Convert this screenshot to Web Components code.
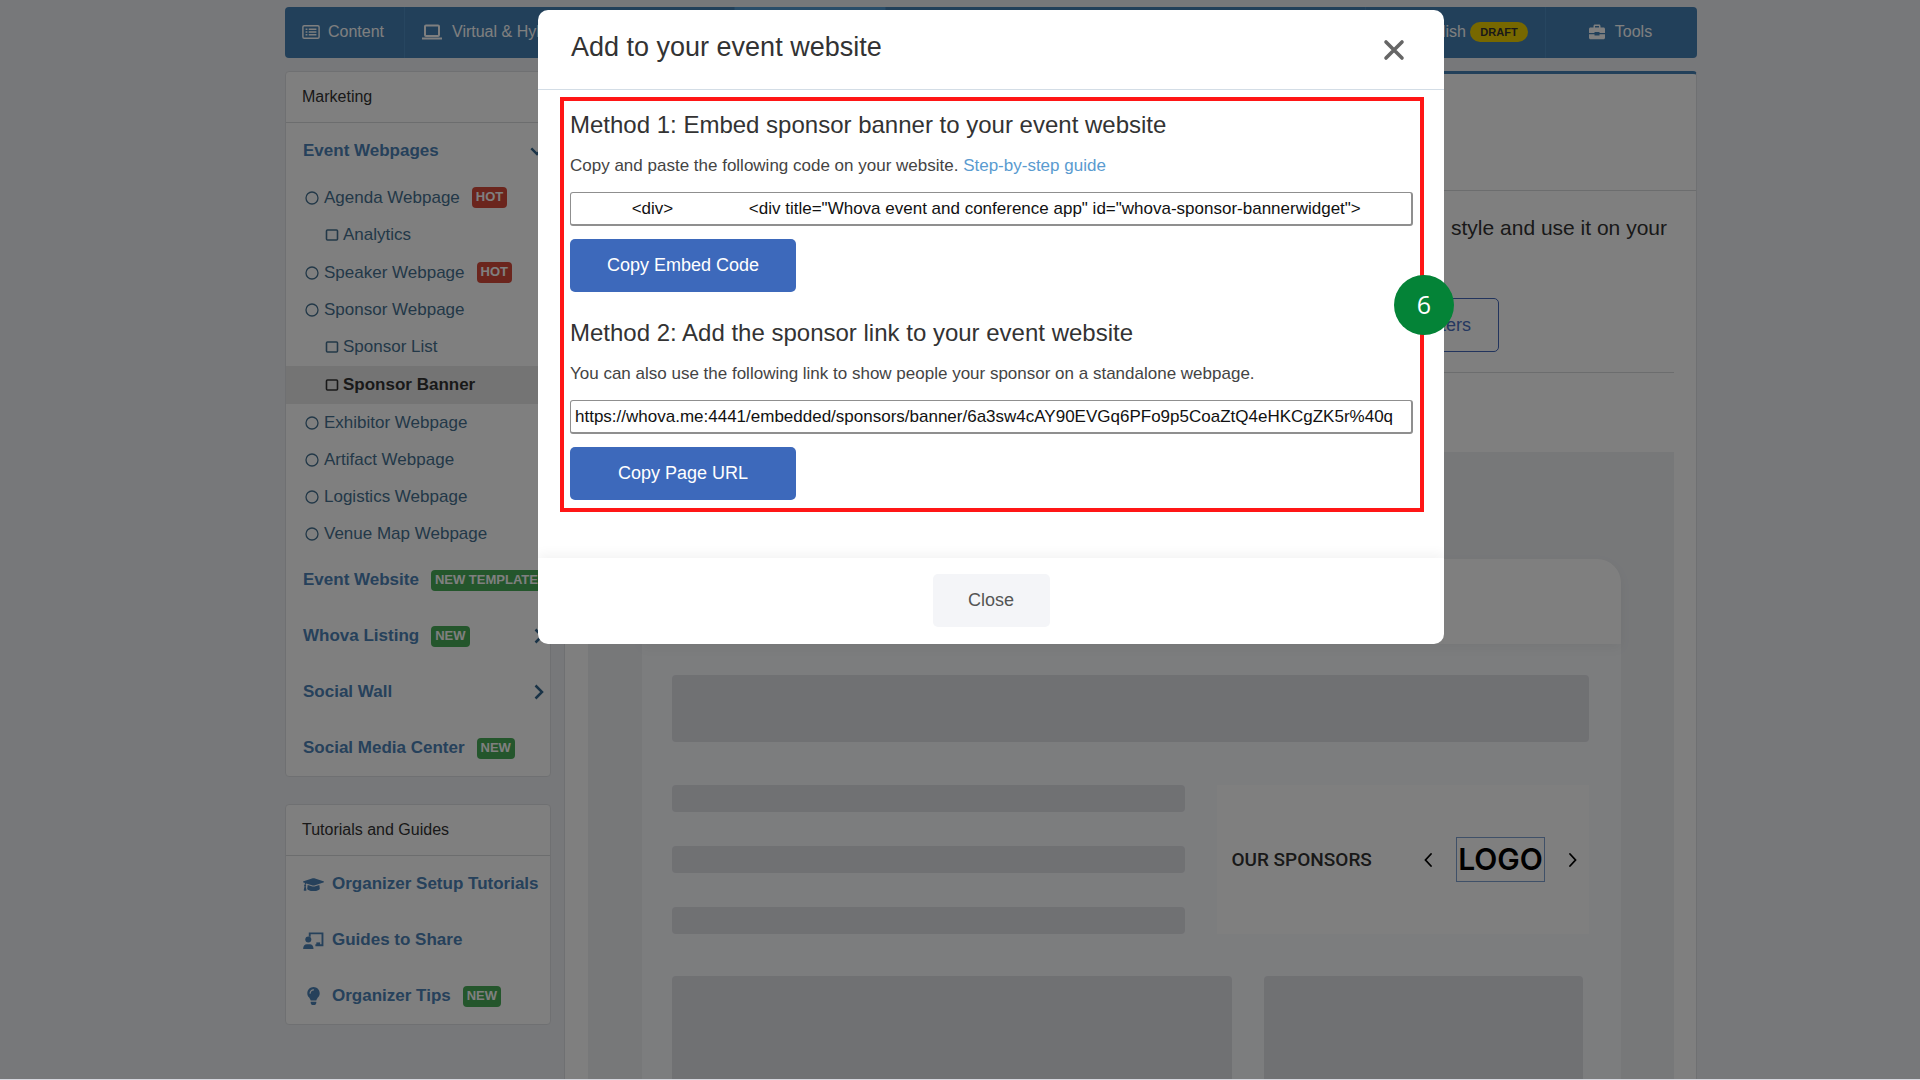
<!DOCTYPE html>
<html lang="en">
<head>
<meta charset="utf-8">
<title>Add to your event website</title>
<style>
  html, body { margin: 0; height: 100%; overflow: hidden; background: #d6d7de; font-family: "Liberation Sans", Arial, sans-serif; color: #333; }
</style>
</head>
<body>
<event-app></event-app>
<script>
const ICONS = {
  list: '<svg viewBox="0 0 20 16" width="18" height="16" fill="none" stroke="currentColor" stroke-width="1.6"><rect x="1" y="1" width="18" height="14" rx="1.5"/><path d="M4 5h2M7.500 5H16M4 8h2M7.500 8H16M4 11h2M7.500 11H16"/></svg>',
  laptop: '<svg viewBox="0 0 20 16" width="20" height="16" fill="none" stroke="currentColor" stroke-width="2"><rect x="3" y="1.500" width="14" height="10.500" rx="1"/><path d="M0 14.500h20"/></svg>',
  toolbox: '<svg viewBox="0 0 16 16" width="16" height="16" fill="currentColor"><path d="M4.500 3.500V2c0-1 .6-1.600 1.500-1.600h4c.9 0 1.500.6 1.500 1.600v1.500h3c.8 0 1.500.7 1.500 1.500v4h-5.500V8h-5v1H0V5c0-.8.7-1.500 1.500-1.500zm1.500 0h4V2H6zM0 10.200h5.500v1.300h5v-1.300H16v3.600c0 .8-.7 1.500-1.500 1.500h-13C.7 15.300 0 14.600 0 13.800z"/></svg>',
  cap: '<svg viewBox="0 0 640 512" width="21" height="17" fill="currentColor"><path d="M622.300 153.200L343.400 67.500c-15.200-4.700-31.600-4.700-46.800 0L17.700 153.200c-23.600 7.300-23.600 38.300 0 45.500l48.600 14.900c-10.700 13.200-17.200 29.300-17.800 46.900-9.600 5.500-16.100 15.700-16.100 27.500 0 10.800 5.700 19.900 13.800 25.700L20.800 428c-2.200 10 5.400 19.500 15.600 19.500h55.100c10.300 0 17.900-9.500 15.600-19.500l-25.500-114.600c8.200-5.800 13.800-14.900 13.800-25.700 0-11.500-6.200-21.300-15.300-26.900.8-15 8.400-28.200 20.700-36.700l195.700 60.100c9.100 2.800 26.600 6.700 46.800 0l278.900-85.700c23.700-7.200 23.700-38.200.1-45.300zM352.800 315.100c-28.500 8.800-52.200 3.200-65.700 0l-145-44.600L128 384c0 35.300 86 72 192 72s192-36.700 192-72l-14.200-113.500z"/></svg>',
  teacher: '<svg viewBox="0 0 22 18" width="21" height="17"><path d="M7 5V1.500h13.500V14H13" fill="none" stroke="currentColor" stroke-width="2"/><path d="M14 11h4v3h-4z" fill="currentColor"/><circle cx="5.500" cy="8" r="3.200" fill="currentColor"/><path d="M0 18c0-3 1.500-5 4-5h3c2.500 0 4 2 4 5z" fill="currentColor"/></svg>',
  bulb: '<svg viewBox="0 0 352 512" width="21" height="18" fill="currentColor"><path d="M96 454c0 6 2 12 5 17l17 26c6 9 16 15 27 15h62c11 0 21-6 27-15l17-26c3-5 5-11 5-17v-38H96zM0 176c0 44 16 85 44 116 17 19 43 59 52 92h160c9-33 35-73 52-92 28-31 44-72 44-116C352 79 273 0 176 0S0 79 0 176zm176-80c-44 0-80 36-80 80 0 9-7 16-16 16s-16-7-16-16c0-62 50-112 112-112 9 0 16 7 16 16s-7 16-16 16z"/></svg>',
  ring: '<svg viewBox="0 0 14 14" width="14" height="14" fill="none" stroke="currentColor" stroke-width="1.300"><circle cx="7" cy="7" r="6"/></svg>',
  square: '<svg viewBox="0 0 14 14" width="14" height="14" fill="none" stroke="currentColor" stroke-width="1.600"><rect x="1.500" y="2" width="11" height="10" rx="1"/></svg>',
  right: '<svg viewBox="0 0 10 16" width="10" height="16" fill="none" stroke="currentColor" stroke-width="2.500"><path d="M1.500 1.500L8 8l-6.500 6.500"/></svg>',
  down: '<svg viewBox="0 0 16 10" width="14" height="9" fill="none" stroke="currentColor" stroke-width="2.800"><path d="M1.500 1.500L8 8l6.500-6.500"/></svg>',
  cross: '<svg viewBox="0 0 22 22" width="22" height="22" fill="none" stroke="#666" stroke-width="3.600" stroke-linecap="round"><path d="M3 3l16 16M19 3L3 19"/></svg>',
  prev: '<svg viewBox="0 0 8 14" width="8" height="14" fill="none" stroke="#000" stroke-width="1.800" stroke-linecap="round"><path d="M7 1L1.500 7 7 13"/></svg>',
  next: '<svg viewBox="0 0 8 14" width="8" height="14" fill="none" stroke="#000" stroke-width="1.800" stroke-linecap="round"><path d="M1 1l5.500 6L1 13"/></svg>'
};

function define(name, render) {
  customElements.define(name, class extends HTMLElement {
    connectedCallback() {
      if (this.shadowRoot) return;
      this.attachShadow({ mode: 'open' }).innerHTML = render(this);
    }
  });
}

define('ui-icon', el => `<style>:host{display:inline-flex;flex:none}svg{display:block}</style>${ICONS[el.getAttribute('name')]}`);

define('ui-tag', () => `<style>
  :host{display:inline-block;flex:none;box-sizing:border-box;height:21px;padding:0 4px;border-radius:4px;background:#48ac58;color:#fff;font:bold 13px/20px "Liberation Sans",Arial,sans-serif;white-space:nowrap}
  :host([kind=hot]){background:#d64b3b}
</style><slot></slot>`);

define('nav-bar', () => `<style>
  :host{display:grid;grid-template-columns:120fr 330fr 151fr 480fr 180fr 151fr;height:51px;border-radius:4px;overflow:hidden;background:#4481b5;font-size:16px}
  a,div{display:flex;align-items:center;gap:8px;padding-bottom:2px;color:#fff;text-decoration:none;white-space:nowrap;box-sizing:border-box;border-right:1px solid #4f8dc0}
  :host > a:last-child{border:0}
  .first{padding-left:17px}.second{padding-left:17px;gap:10px}
  .active{background:#559bd2}.pub{justify-content:flex-end;padding-right:17px;gap:4px}
  .tools{justify-content:center;gap:10px;padding-right:2px}
  b{box-sizing:border-box;width:58px;height:20px;border-radius:10px;background:#efd000;color:#333;font-size:11px;line-height:21px;text-align:center}
</style>
<a class="first" href="#"><ui-icon name="list"></ui-icon>Content</a>
<a class="second" href="#"><ui-icon name="laptop"></ui-icon>Virtual &amp; Hybrid</a>
<div class="active"></div><div></div>
<a class="pub" href="#">Publish<b>DRAFT</b></a>
<a class="tools" href="#"><ui-icon name="toolbox"></ui-icon>Tools</a>`);

define('side-card', el => `<style>
  :host{display:block;background:#fff;border:1px solid #dfe1e5;border-radius:4px;box-sizing:border-box}
  h2{margin:0;padding:0 16px;font-size:16px;font-weight:400;line-height:50px;color:#333;border-bottom:1px solid #d8dadd}
</style><h2>${el.getAttribute('heading')}</h2><slot></slot>`);

define('side-link', el => {
  const icon = el.getAttribute('icon'), arrow = el.getAttribute('arrow');
  return `<style>
  :host{display:block;font-size:17px}
  a{display:flex;align-items:center;height:56px;padding:0 6px 0 17px;color:#4c82b6;font-weight:bold;text-decoration:none;white-space:nowrap;overflow:hidden}
  a ui-icon:first-child{margin-right:8px}
  .label{margin-right:12px}
  .arrow{margin-left:auto;color:#34678e}
  :host([level="1"]) a{height:37px;padding-left:19px;color:#467190;font-weight:400}
  :host([level="1"]) a ui-icon:first-child{margin-right:5px}
  :host([level="2"]) a{height:38px;padding-left:39px;color:#467190;font-weight:400}
  :host([level="2"]) a ui-icon:first-child{margin-right:4px}
  :host([current]) a{background:#e9e9e9;color:#333;font-weight:bold}
</style><a href="#">${icon ? `<ui-icon name="${icon}"></ui-icon>` : ''}<span class="label"><slot></slot></span><slot name="tag"></slot>${arrow ? `<ui-icon class="arrow" name="${arrow}"></ui-icon>` : ''}</a>`;
});

define('site-preview', () => `<style>
  :host{display:block;background:#eef0f3;padding:107px 53px 0 54px;margin-top:79px}
  .bar{position:relative;height:85px;background:#fff;border-radius:24px 24px 0 0;box-shadow:0 4px 12px #0000000d}
  .page{background:#f8fafc;padding:31px 32px 0 30px;height:600px}
  .block{background:#e1e2e7;border-radius:4px}
  .hero{height:67px;margin-bottom:43px}
  .row{display:grid;grid-template-columns:514fr 372fr;gap:32px;margin-bottom:42px}
  .lines{display:grid;gap:34px}
  .lines .block{height:27px}
  .cols{display:grid;grid-template-columns:560fr 319fr;gap:32px;padding-right:6px}
  .cols .block{height:300px}
  .sponsors{display:flex;align-items:center;background:#fff;padding:0 12px 0 14px;font-family:Roboto,sans-serif}
  h3{margin:0 auto 0 0;font-size:19px;line-height:24px;font-weight:500;color:#333}
  button{display:flex;padding:0;border:0;background:none}
  .logo{margin:0 24px;box-sizing:border-box;width:89px;height:45px;border:1px solid #7fa0d0;font:600 30px/42px Inter,sans-serif;color:#000;text-align:center}
</style>
<div class="bar"></div>
<div class="page">
  <div class="block hero"></div>
  <div class="row">
    <div class="lines"><div class="block"></div><div class="block"></div><div class="block"></div></div>
    <div class="sponsors"><h3>OUR SPONSORS</h3><button aria-label="Previous"><ui-icon name="prev"></ui-icon></button><div class="logo">LOGO</div><button aria-label="Next"><ui-icon name="next"></ui-icon></button></div>
  </div>
  <div class="cols"><div class="block"></div><div class="block"></div></div>
</div>`);

define('main-card', () => `<style>
  :host{display:block;box-sizing:border-box;background:#fff;border:1px solid #dfe1e5;border-top:3px solid #4481b5;border-radius:4px}
  header{height:116px;border-bottom:1px solid #d8dadd}
  .body{padding:23px 22px 0 23px}
  p{margin:0 7px 0 0;font-size:21px;line-height:28px;text-align:right;color:#333}
  .actions{display:flex;justify-content:flex-end;padding:56px 175px 20px 0;border-bottom:1px solid #d8dadd}
  button{width:160px;height:54px;box-sizing:border-box;border:1px solid #4468bb;border-radius:5px;background:#fff;color:#4a70c0;font:18px "Liberation Sans",Arial,sans-serif;text-align:right;padding:0 27px}
</style>
<header></header>
<div class="body"><p>style and use it on your</p><div class="actions"><button>Filters</button></div><site-preview></site-preview></div>`);

define('copy-method', el => `<style>
  :host{display:block}
  h3{margin:0 0 13px;font-size:24px;line-height:32px;font-weight:400;color:#333}
  label{display:block;margin-bottom:14px;font-size:17px;line-height:24px;color:#444}
  ::slotted(a){color:#5a9bd0;text-decoration:none}
  input{display:block;width:100%;height:34px;box-sizing:border-box;margin-bottom:13px;padding:0 4px;border:2px solid #8f8f8f;border-width:1px 2px 2px 1px;border-radius:3px;background:#fff;color:#111;font:17px "Liberation Sans",Arial,sans-serif}
  button{display:block;width:226px;height:53px;border:0;border-radius:5px;background:#3d69bb;color:#fff;font:18px "Liberation Sans",Arial,sans-serif}
</style>
<h3>${el.getAttribute('heading')}</h3>
<label for="code"><slot></slot></label>
<input id="code" readonly value="${el.getAttribute('value').replace(/&/g, '&amp;').replace(/"/g, '&quot;').replace(/</g, '&lt;')}">
<button>${el.getAttribute('action')}</button>`);

define('modal-dialog', () => `<style>
  :host{display:flex;flex-direction:column;box-sizing:border-box;width:906px;max-width:100%;background:#fff;border-radius:10px}
  header{display:flex;align-items:center;justify-content:space-between;height:79px;padding:0 39px 0 33px;border-bottom:1px solid #d3dde6}
  h1{margin:0 0 6px;font-size:27px;line-height:36px;font-weight:400;color:#333}
  header button{display:flex;padding:0;border:0;background:none}
  .body{padding:7px 20px 46px 22px}
  footer{display:flex;justify-content:center;padding:16px 0 17px;border-radius:0 0 10px 10px;box-shadow:0 -4px 12px #0000000d;clip-path:inset(-16px 0 0 0)}
  footer button{width:117px;height:53px;border:0;border-radius:5px;background:#f4f5f8;color:#555;font:18px "Liberation Sans",Arial,sans-serif}
</style>
<header><h1><slot name="title"></slot></h1><button aria-label="Close dialog"><ui-icon name="cross"></ui-icon></button></header>
<div class="body"><slot></slot></div>
<footer><button>Close</button></footer>`);

define('step-callout', () => `<style>
  :host{display:grid;gap:25px;position:relative;border:4px solid #ff1616;padding:8px 7px 8px 6px}
</style><slot></slot>`);

define('step-badge', () => `<style>
  :host{position:absolute;top:174px;right:-34px;width:60px;height:60px;border-radius:50%;background:#048337;color:#fff;font:25px/58px "Open Sans",sans-serif;text-align:center}
</style><slot></slot>`);

define('event-app', () => `<style>
  :host{display:block;position:relative;height:calc(100vh - 1px);box-sizing:border-box;overflow:hidden;background:#eef0f4;padding:7px 223px 0 285px}
  .cols{display:grid;grid-template-columns:266px minmax(0,1fr);gap:13px;margin-top:13px;align-items:start}
  .side{display:grid;grid-template-columns:minmax(0,1fr);gap:27px}
  .overlay{position:absolute;inset:0;display:flex;justify-content:center;align-items:flex-start;padding:10px 223px 0 285px;background:#00000080}
</style>
<nav-bar></nav-bar>
<div class="cols">
  <div class="side">
    <side-card heading="Marketing">
      <side-link arrow="down">Event Webpages</side-link>
      <side-link level="1" icon="ring">Agenda Webpage<ui-tag slot="tag" kind="hot">HOT</ui-tag></side-link>
      <side-link level="2" icon="square">Analytics</side-link>
      <side-link level="1" icon="ring">Speaker Webpage<ui-tag slot="tag" kind="hot">HOT</ui-tag></side-link>
      <side-link level="1" icon="ring">Sponsor Webpage</side-link>
      <side-link level="2" icon="square">Sponsor List</side-link>
      <side-link level="2" icon="square" current>Sponsor Banner</side-link>
      <side-link level="1" icon="ring">Exhibitor Webpage</side-link>
      <side-link level="1" icon="ring">Artifact Webpage</side-link>
      <side-link level="1" icon="ring">Logistics Webpage</side-link>
      <side-link level="1" icon="ring">Venue Map Webpage</side-link>
      <side-link>Event Website<ui-tag slot="tag">NEW TEMPLATE</ui-tag></side-link>
      <side-link arrow="right">Whova Listing<ui-tag slot="tag">NEW</ui-tag></side-link>
      <side-link arrow="right">Social Wall</side-link>
      <side-link>Social Media Center<ui-tag slot="tag">NEW</ui-tag></side-link>
    </side-card>
    <side-card heading="Tutorials and Guides">
      <side-link icon="cap">Organizer Setup Tutorials</side-link>
      <side-link icon="teacher">Guides to Share</side-link>
      <side-link icon="bulb">Organizer Tips<ui-tag slot="tag">NEW</ui-tag></side-link>
    </side-card>
  </div>
  <main-card></main-card>
</div>
<div class="overlay">
  <modal-dialog role="dialog" aria-modal="true">
    <span slot="title">Add to your event website</span>
    <step-callout>
      <copy-method heading="Method 1: Embed sponsor banner to your event website" action="Copy Embed Code"
        value="            &lt;div&gt;                &lt;div title=&quot;Whova event and conference app&quot; id=&quot;whova-sponsor-bannerwidget&quot;&gt;">Copy and paste the following code on your website. <a href="#">Step-by-step guide</a></copy-method>
      <copy-method heading="Method 2: Add the sponsor link to your event website" action="Copy Page URL"
        value="https://whova.me:4441/embedded/sponsors/banner/6a3sw4cAY90EVGq6PFo9p5CoaZtQ4eHKCgZK5r%40q">You can also use the following link to show people your sponsor on a standalone webpage.</copy-method>
      <step-badge>6</step-badge>
    </step-callout>
  </modal-dialog>
</div>`);
</script>
</body>
</html>
